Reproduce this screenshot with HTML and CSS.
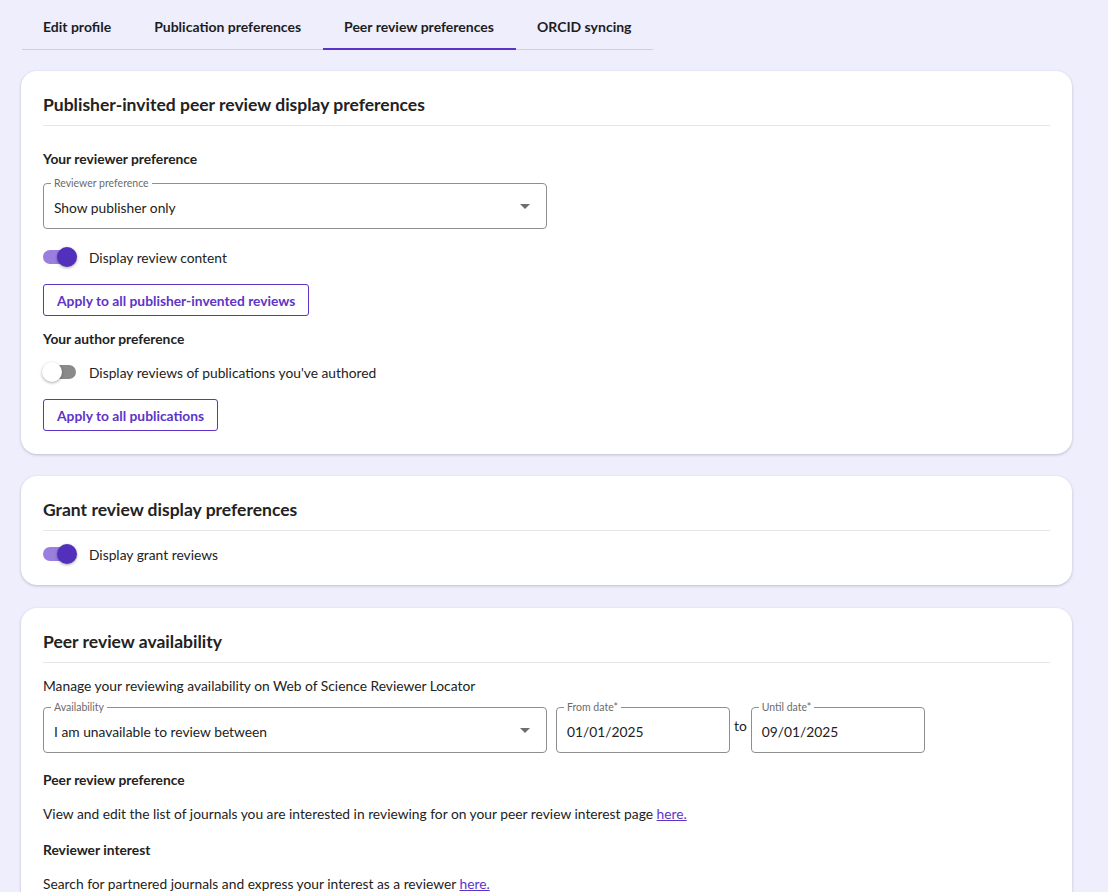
FILE: index.html
```html
<!DOCTYPE html>
<html>
<head>
  <title>Peer review preferences</title>
  <link rel="stylesheet" href="styles.css">
</head>
<body>
  <div class="page">
    <nav class="tabs">
      <a class="tab">Edit profile</a>
      <a class="tab">Publication preferences</a>
      <a class="tab active">Peer review preferences</a>
      <a class="tab">ORCID syncing</a>
    </nav>

    <!-- publisher invited reviews -->
    <section class="card first-card">
      <h2 class="card-title">Publisher-invited peer review display preferences</h2>
      <h3 class="label first">Your reviewer preference</h3>
      <div class="field wide">
        <span class="field-label">Reviewer preference</span>
        <span class="field-value">Show publisher only</span>
        <span class="caret"></span>
      </div>
      <label class="switch-row">
        <span class="switch on"><span class="thumb"></span></span>
        Display review content
      </label>
      <button class="outline-btn">Apply to all publisher-invented reviews</button>
      <h3 class="label">Your author preference</h3>
      <label class="switch-row tight">
        <span class="switch"><span class="thumb"></span></span>
        Display reviews of publications you've authored
      </label>
      <button class="outline-btn">Apply to all publications</button>
    </section>

    <section class="card small">
      <h2 class="card-title">Grant review display preferences</h2>
      <label class="switch-row grant">
        <span class="switch on"><span class="thumb"></span></span>
        Display grant reviews
      </label>
    </section>

    <section class="card avail">
      <h2 class="card-title">Peer review availability</h2>
      <p class="text manage">Manage your reviewing availability on Web of Science Reviewer Locator</p>
      <div class="date-row">
        <div class="field wide">
          <span class="field-label">Availability</span>
          <span class="field-value">I am unavailable to review between</span>
          <span class="caret"></span>
        </div>
        <div class="field date">
          <span class="field-label">From date*</span>
          <span class="field-value">01/01/2025</span>
        </div>
        <span class="to">to</span>
        <div class="field date">
          <span class="field-label">Until date*</span>
          <span class="field-value">09/01/2025</span>
        </div>
      </div>
      <h3 class="label pr">Peer review preference</h3>
      <p class="text">View and edit the list of journals you are interested in reviewing for on your peer review interest page <a href="#">here.</a></p>
      <h3 class="label ri">Reviewer interest</h3>
      <p class="text">Search for partnered journals and express your interest as a reviewer <a href="#">here.</a></p>
    </section>
  </div>
</body>
</html>
```

FILE: styles.css
```css
body {
  margin: 0;
  background-color: #eeeefd;
  font-family: "Source Sans Pro", Lato, "Liberation Sans", sans-serif;
  color: #212121;
  font-size: 13.8px;
}
.page {
  width: 1051px;
  margin-left: 21px;
  padding-top: 3px;
  padding-bottom: 40px;
}
.tabs {
  display: inline-flex;
  margin-left: 1px;
  border-bottom: 1px solid #cfcfdf;
}
.tab {
  padding: 14px 22px 12px 21px;
  font-size: 14px;
  font-weight: 700;
  line-height: 19px;
  color: #1d1d1d;
  border-bottom: 2px solid transparent;
  margin-bottom: -1px;
}
.tab.active {
  border-bottom-color: #5e34c8;
}
.card {
  background: #fff;
  border-radius: 16px;
  box-shadow: 0 1px 3px rgba(60, 60, 90, 0.28);
  padding: 22px 22px 22px 22px;
  margin-top: 21px;
}
.card.first-card {
  padding-bottom: 23px;
}
.card.small {
  margin-top: 22px;
  padding-bottom: 19px;
}
.card.avail {
  margin-top: 23px;
}
.card-title {
  margin: 0;
  font-size: 17.5px;
  line-height: 24px;
  font-weight: 700;
  color: #222;
  padding-bottom: 8px;
  border-bottom: 1px solid #e6e6ea;
}
.label {
  margin: 13px 0 0;
  font-size: 13.8px;
  line-height: 20px;
  font-weight: 700;
  color: #222;
}
.label.first {
  margin-top: 23px;
}
.label.pr {
  margin-top: 17px;
}
.label.ri {
  margin-top: 16px;
}
.field {
  position: relative;
  box-sizing: border-box;
  height: 46px;
  border: 1px solid #8f8f8f;
  border-radius: 4px;
  display: flex;
  align-items: center;
  padding: 0 10px;
}
.label + .field {
  margin-top: 14px;
}
.field.wide {
  width: 504px;
}
.field.date {
  width: 174px;
}
.field-label {
  position: absolute;
  top: -7px;
  left: 7px;
  padding: 0 3px;
  background: #fff;
  font-size: 10.5px;
  line-height: 12px;
  color: #6b6b6b;
}
.field-value {
  font-size: 13.8px;
  color: #222;
  padding-top: 3px;
}
.caret {
  margin-left: auto;
  margin-right: 6px;
  width: 0;
  height: 0;
  border-left: 5px solid transparent;
  border-right: 5px solid transparent;
  border-top: 5px solid #6e6e6e;
}
.switch-row {
  display: flex;
  align-items: center;
  height: 24px;
  margin-top: 16px;
  gap: 13px;
  color: #222;
}
.switch-row.tight {
  margin-top: 11px;
}
.switch-row.grant {
  margin-top: 11px;
}
.switch {
  position: relative;
  width: 33px;
  height: 14px;
  border-radius: 7px;
  background: #8a8a8a;
  display: flex;
  align-items: center;
}
.switch.on {
  background: #9a7fe0;
  justify-content: flex-end;
}
.thumb {
  width: 20px;
  height: 20px;
  border-radius: 50%;
  background: #fff;
  box-shadow: 0 1px 3px rgba(0, 0, 0, 0.35);
  margin-left: -1px;
}
.switch.on .thumb {
  background: #5330bb;
  margin-left: 0;
  margin-right: -1px;
}
.outline-btn {
  display: block;
  box-sizing: border-box;
  margin-top: 15px;
  height: 32px;
  padding: 0 13px;
  background: #fff;
  border: 1px solid #5e34c8;
  border-radius: 3px;
  color: #5e34c8;
  font-family: inherit;
  font-size: 13.8px;
  font-weight: 700;
}
.text {
  margin: 14px 0 0;
  line-height: 20px;
  color: #222;
}
.text.manage {
  margin-top: 13px;
}
.text a {
  color: #5e34c8;
}
.date-row {
  display: flex;
  align-items: flex-start;
  margin-top: 11px;
}
.date-row .field.date {
  margin-left: 9px;
}
.to {
  margin-left: 4px;
  margin-right: -5px;
  margin-top: 10px;
}
```
